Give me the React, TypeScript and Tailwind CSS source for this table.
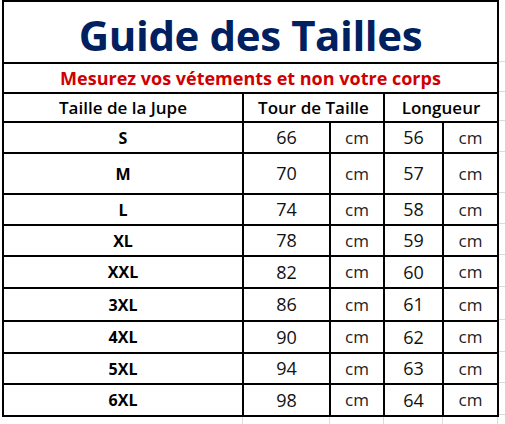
const rows = [
  { size: "S", tour: 66, long: 56, h: "h-[29px]" },
  { size: "M", tour: 70, long: 57, h: "h-[39px]" },
  { size: "L", tour: 74, long: 58, h: "h-[29px]" },
  { size: "XL", tour: 78, long: 59, h: "h-[29px]" },
  { size: "XXL", tour: 82, long: 60, h: "h-[30px]" },
  { size: "3XL", tour: 86, long: 61, h: "h-[31px]" },
  { size: "4XL", tour: 90, long: 62, h: "h-[30px]" },
  { size: "5XL", tour: 94, long: 63, h: "h-[29px]" },
  { size: "6XL", tour: 98, long: 64, h: "h-[30px]" },
];

const cell = "bg-white flex items-center justify-center";

export default function App() {
  return (
    <div
      className="w-[505px] h-[424px] bg-white text-black overflow-hidden"
      style={{ fontFamily: '"Open Sans", "Liberation Sans", sans-serif' }}
    >
      <div className="flex">
        <div className="w-[2px]" />
        <div className="w-[497px] bg-black p-[2px] grid grid-cols-[238px_85px_52px_57px_53px] gap-[2px]">
          <div className={`${cell} col-span-5 h-[60px] pt-[5px]`}>
            <span className="text-[42px] font-bold text-[#002060] leading-none tracking-[-0.4px]">
              Guide des Tailles
            </span>
          </div>
          <div className={`${cell} col-span-5 h-[28px]`}>
            <span className="text-[18px] font-bold text-[#d00000] leading-none">
              Mesurez vos vétements et non votre corps
            </span>
          </div>
          <div className={`${cell} h-[27px] text-[17px] font-semibold`}>Taille de la Jupe</div>
          <div className={`${cell} col-span-2 text-[17px] font-semibold`}>Tour de Taille</div>
          <div className={`${cell} col-span-2 text-[17px] font-semibold`}>Longueur</div>
          {rows.map((r) => (
            <div key={r.size} className="contents">
              <div className={`${cell} ${r.h} text-[16px] font-bold`}>{r.size}</div>
              <div className={`${cell} text-[18px] text-[#111]`}>{r.tour}</div>
              <div className={`${cell} text-[17px] text-[#222]`}>cm</div>
              <div className={`${cell} text-[18px] text-[#111]`}>{r.long}</div>
              <div className={`${cell} text-[17px] text-[#222]`}>cm</div>
            </div>
          ))}
        </div>
        <div className="flex-1 flex flex-col">
          <div className="h-[62px] border-b border-[#dadada]" />
          <div className="h-[30px] border-b border-[#dadada]" />
          <div className="h-[29px] border-b border-[#dadada]" />
          {rows.map((r) => (
            <div key={r.size} className={`${r.h} mt-[2px] border-b border-[#dadada]`} />
          ))}
        </div>
      </div>
      <div className="flex h-[7px]">
        <div className="w-[243px] border-r border-[#dadada]" />
        <div className="w-[87px] border-r border-[#dadada]" />
        <div className="w-[54px] border-r border-[#dadada]" />
        <div className="w-[59px] border-r border-[#dadada]" />
        <div className="w-[55px] border-r border-[#dadada]" />
      </div>
    </div>
  );
}
